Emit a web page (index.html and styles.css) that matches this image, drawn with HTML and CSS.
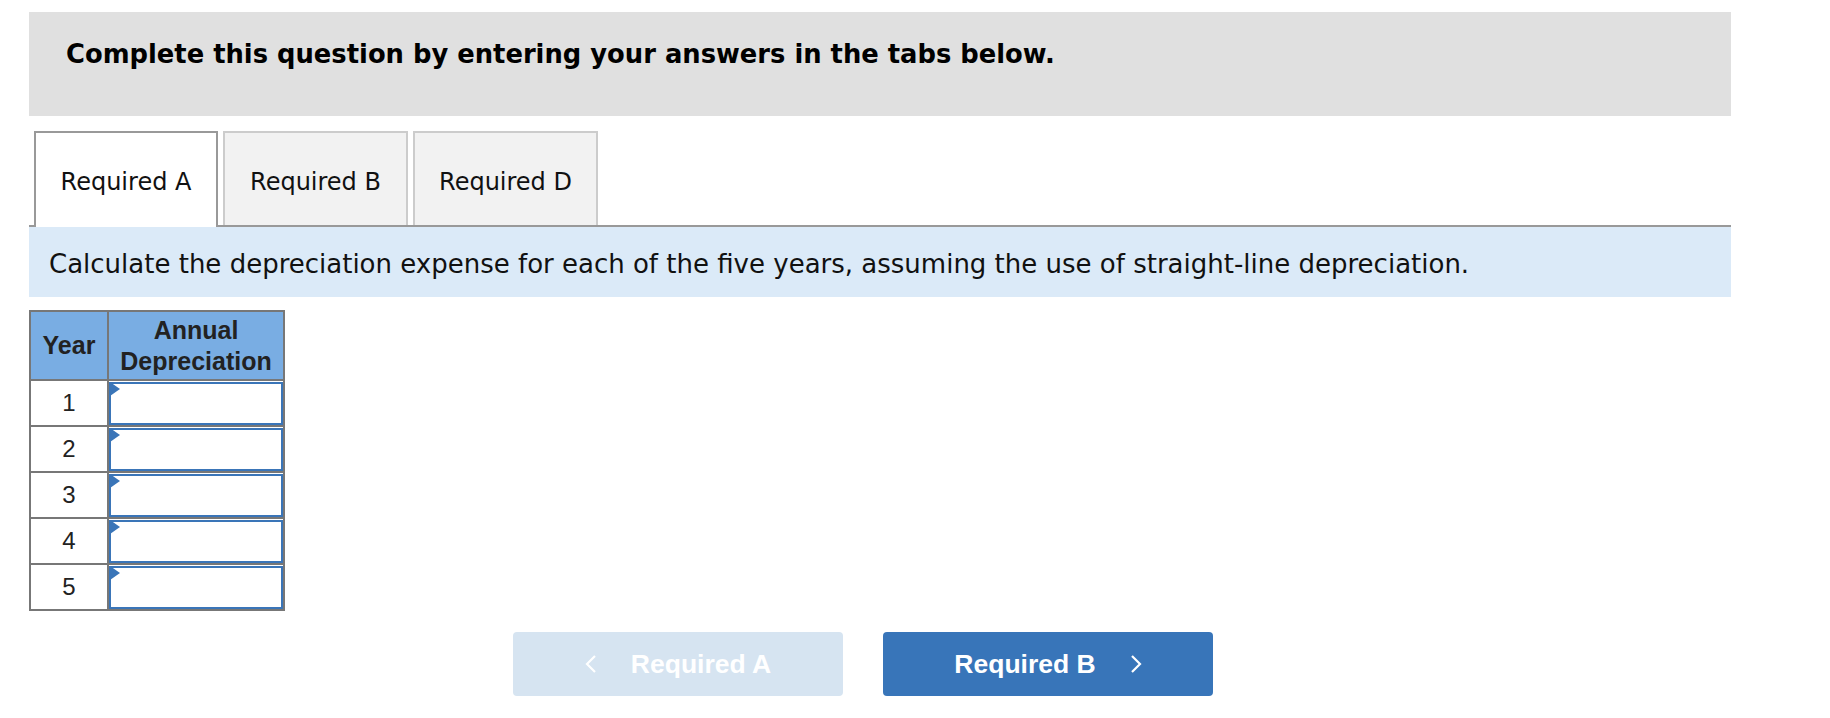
FILE: index.html
```html
<!DOCTYPE html>
<html lang="en">
<head>
<meta charset="utf-8">
<title>Required A</title>
<link rel="stylesheet" href="styles.css">
</head>
<body>
<div class="page">
  <div class="intro">Complete this question by entering your answers in the tabs below.</div>

  <div class="tabs">
    <div class="tab active">Required A</div>
    <div class="tab">Required B</div>
    <div class="tab">Required D</div>
  </div>

  <div class="instruction">Calculate the depreciation expense for each of the five years, assuming the use of straight-line depreciation.</div>

  <table class="dep">
    <colgroup><col class="c-year"><col class="c-dep"></colgroup>
    <thead>
      <tr><th>Year</th><th>Annual<br>Depreciation</th></tr>
    </thead>
    <tbody>
      <tr><td class="yr">1</td><td class="in"><span class="flag"></span><input type="text" class="field"></td></tr>
      <tr><td class="yr">2</td><td class="in"><span class="flag"></span><input type="text" class="field"></td></tr>
      <tr><td class="yr">3</td><td class="in"><span class="flag"></span><input type="text" class="field"></td></tr>
      <tr><td class="yr">4</td><td class="in"><span class="flag"></span><input type="text" class="field"></td></tr>
      <tr><td class="yr">5</td><td class="in"><span class="flag"></span><input type="text" class="field"></td></tr>
    </tbody>
  </table>

  <div class="nav">
    <button class="btn prev" type="button">
      <svg class="chev" width="12" height="20" viewBox="0 0 12 20"><polyline points="10,2 2,10 10,18" fill="none" stroke="#fff" stroke-width="2.2"/></svg>
      <span>Required A</span>
    </button>
    <button class="btn next" type="button">
      <span>Required B</span>
      <svg class="chev" width="12" height="20" viewBox="0 0 12 20"><polyline points="2,2 10,10 2,18" fill="none" stroke="#fff" stroke-width="2.2"/></svg>
    </button>
  </div>
</div>
</body>
</html>
```

FILE: styles.css
```css
html, body {
  margin: 0;
  padding: 0;
  background: #ffffff;
}

.page {
  padding: 12px 0 0 29px;
  width: 1702px;
}

.intro {
  background: #e0e0e0;
  height: 104px;
  box-sizing: border-box;
  padding: 27px 0 0 37px;
  font-family: "DejaVu Sans", Verdana, sans-serif;
  font-weight: bold;
  font-size: 25.8px;
  line-height: 30px;
  color: #000;
}

.tabs {
  display: flex;
  gap: 5px;
  padding-left: 5px;
  margin-top: 15px;
  border-bottom: 2px solid #999999;
  height: 94px;
}

.tab {
  width: 185px;
  box-sizing: border-box;
  height: 94px;
  border: 2px solid #cccccc;
  border-bottom: none;
  background: #f2f2f2;
  display: flex;
  align-items: center;
  justify-content: center;
  padding-top: 5px;
  font-family: "DejaVu Sans", Verdana, sans-serif;
  font-size: 24px;
  color: #111;
}

.tab.active {
  width: 184px;
  height: 96px;
  border-color: #999999;
  background: #ffffff;
  padding-top: 3px;
  position: relative;
}

.instruction {
  background: #dbeaf8;
  height: 70px;
  box-sizing: border-box;
  padding: 22px 0 0 20px;
  font-family: "DejaVu Sans", Verdana, sans-serif;
  font-size: 26px;
  line-height: 30px;
  color: #111;
}

.dep {
  margin-top: 13px;
  border-collapse: collapse;
  border: 2px solid #777777;
  table-layout: fixed;
  width: 254px;
  font-family: "Liberation Sans", Arial, sans-serif;
}

.c-year { width: 78px; }
.c-dep { width: 176px; }

.dep th {
  background: #79ade3;
  border: 2px solid #777777;
  height: 67px;
  padding: 0;
  font-size: 25px;
  line-height: 31px;
  font-weight: bold;
  color: #222;
  text-align: center;
}

.dep td {
  border: 2px solid #777777;
  height: 44px;
  padding: 0;
}

.yr {
  text-align: center;
  font-size: 24px;
  color: #222;
}

.in {
  position: relative;
}

.field {
  display: block;
  box-sizing: border-box;
  width: 100%;
  height: 43px;
  margin: 0;
  border: 2px solid #3a75b8;
  background: #fff;
  outline: none;
  font-family: "Liberation Sans", Arial, sans-serif;
  font-size: 20px;
}

.flag {
  position: absolute;
  left: 1px;
  top: 1px;
  width: 0;
  height: 0;
  border-left: 10px solid #3a75b8;
  border-top: 7px solid transparent;
  border-bottom: 7px solid transparent;
}

.nav {
  display: flex;
  gap: 40px;
  margin-top: 21px;
  padding-left: 484px;
}

.btn {
  width: 330px;
  height: 64px;
  border: none;
  border-radius: 4px;
  display: flex;
  align-items: center;
  justify-content: center;
  gap: 34px;
  font-family: "Liberation Sans", Arial, sans-serif;
  font-weight: bold;
  font-size: 26.5px;
  color: #ffffff;
  padding: 0;
}

.prev {
  background: #d6e4f1;
}

.next {
  background: #3875b9;
}

.chev {
  display: block;
}
```
